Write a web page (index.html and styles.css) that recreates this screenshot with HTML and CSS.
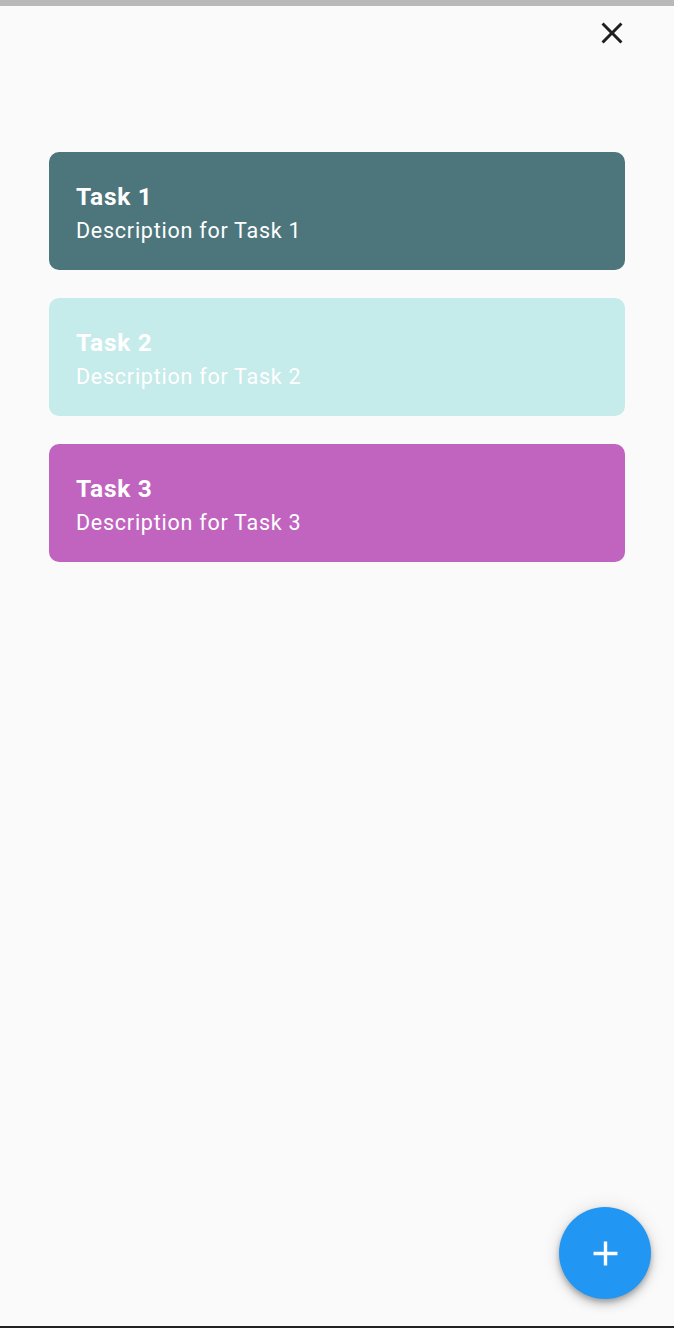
FILE: index.html
```html
<!DOCTYPE html>
<html>
<head>
<meta charset="utf-8">
<link rel="stylesheet" href="styles.css">
</head>
<body>
<div class="screen">
  <div class="status"></div>
  <header class="header">
    <button class="close" aria-label="Close">
      <svg viewBox="0 0 24 24" width="36" height="36"><path d="M19 6.41L17.59 5 12 10.59 6.41 5 5 6.41 10.59 12 5 17.59 6.41 19 12 13.41 17.59 19 19 17.59 13.41 12z" fill="#1f1f1f"/></svg>
    </button>
  </header>
  <main class="list">
    <div class="card card-1">
      <div class="title">Task 1</div>
      <div class="desc">Description for Task 1</div>
    </div>
    <div class="card card-2">
      <div class="title">Task 2</div>
      <div class="desc">Description for Task 2</div>
    </div>
    <div class="card card-3">
      <div class="title">Task 3</div>
      <div class="desc">Description for Task 3</div>
    </div>
  </main>
  <button class="fab" aria-label="Add">
    <svg viewBox="0 0 24 24" width="41" height="41"><path d="M19 13h-6v6h-2v-6H5v-2h6V5h2v6h6v2z" fill="#ffffff"/></svg>
  </button>
  <div class="bottom"></div>
</div>
</body>
</html>
```

FILE: styles.css
```css
html, body {
  margin: 0;
  padding: 0;
}
body {
  background: #fafafa;
  font-family: Roboto, "Noto Sans", sans-serif;
}
.screen {
  position: relative;
  width: 674px;
  height: 1328px;
  display: flex;
  flex-direction: column;
  overflow: hidden;
  background: #fafafa;
}
.status {
  height: 6px;
  background: #b9b9b9;
  flex: none;
}
.header {
  display: flex;
  justify-content: flex-end;
  padding: 8.5px 44.5px 0 0;
  flex: none;
}
.close {
  width: 36px;
  height: 36px;
  padding: 0;
  border: none;
  background: transparent;
  display: block;
}
.close svg { display: block; }
.list {
  flex: 1;
  display: flex;
  flex-direction: column;
  gap: 28px;
  padding: 101.5px 49px 0 49px;
}
.card {
  box-sizing: border-box;
  height: 118px;
  flex: none;
  border-radius: 10px;
  padding: 30.5px 27px 0 27px;
  color: #ffffff;
}
.card-1 { background: #4c767c; }
.card-2 { background: #c5ebea; }
.card-3 { background: #c064bf; }
.title {
  font-size: 24.5px;
  font-weight: 700;
  line-height: 28px;
  letter-spacing: 0.7px;
  margin-bottom: 7px;
}
.desc {
  font-size: 21.5px;
  font-weight: 400;
  line-height: 25px;
  letter-spacing: 0.75px;
}
.fab {
  position: absolute;
  left: 559px;
  top: 1207px;
  width: 92px;
  height: 92px;
  border-radius: 50%;
  border: none;
  padding: 0;
  background: #2196f3;
  display: flex;
  align-items: center;
  justify-content: center;
  box-shadow: 0 6px 10px rgba(0,0,0,0.14), 0 1px 18px rgba(0,0,0,0.12), 0 3px 5px rgba(0,0,0,0.2);
}
.fab svg { display: block; }
.bottom {
  height: 2px;
  background: #222222;
  flex: none;
}
```
